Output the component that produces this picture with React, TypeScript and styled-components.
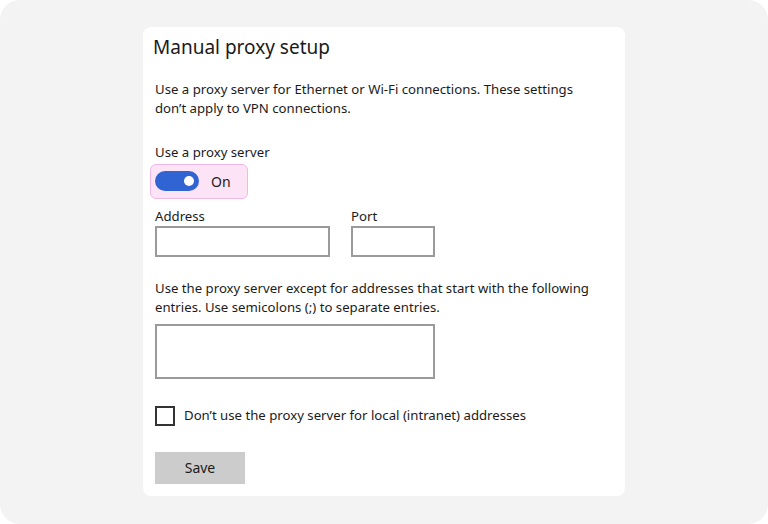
import styled, { createGlobalStyle } from "styled-components";

const GlobalStyle = createGlobalStyle`
  html, body {
    margin: 0;
    padding: 0;
    background: #ffffff;
  }
  body {
    font-family: "Noto Sans", "Open Sans", sans-serif;
    color: #1b1b1b;
  }
`;

const Backdrop = styled.div`
  width: 768px;
  height: 524px;
  box-sizing: border-box;
  background: #f3f3f3;
  border-radius: 20px;
  padding: 27px 0 0 143px;
`;

const Card = styled.section`
  width: 482px;
  height: 469px;
  box-sizing: border-box;
  background: #ffffff;
  border-radius: 8px;
  padding: 6px 12px 0 12px;
  display: flex;
  flex-direction: column;
  align-items: flex-start;
`;

const Title = styled.h1`
  margin: 0 0 0 -2px;
  font-size: 19px;
  font-weight: 400;
  line-height: 28px;
  color: #1a1a1a;
`;

interface TextProps {
  $gap: number;
}

const Text = styled.p<TextProps>`
  margin: ${(p: TextProps) => p.$gap}px 0 0 0;
  font-size: 13.2px;
  line-height: 19px;
  color: #1b1b1b;
`;

const SwitchBox = styled.div`
  margin: 1.5px 0 0 -5px;
  width: 98px;
  height: 35px;
  box-sizing: border-box;
  border: 1px solid #f1b8e6;
  border-radius: 6px;
  background: #fce3f6;
  display: flex;
  align-items: center;
  padding-left: 4px;
  gap: 12px;
`;

const Track = styled.span`
  position: relative;
  width: 44px;
  height: 20px;
  border-radius: 10px;
  background: #3064d3;
  flex-shrink: 0;
`;

const Knob = styled.span`
  position: absolute;
  right: 5px;
  top: 5px;
  width: 10px;
  height: 10px;
  border-radius: 50%;
  background: #ffffff;
`;

const SwitchLabel = styled.span`
  font-size: 14px;
  line-height: 19px;
`;

const FieldRow = styled.div`
  margin-top: 8.5px;
  display: flex;
  gap: 21px;
`;

const Field = styled.label`
  display: flex;
  flex-direction: column;
  font-size: 13.2px;
  line-height: 19px;
`;

interface InputProps {
  $w: number;
  $h: number;
}

const Input = styled.input<InputProps>`
  width: ${(p: InputProps) => p.$w}px;
  height: ${(p: InputProps) => p.$h}px;
  box-sizing: border-box;
  margin: 0;
  border: 2px solid #9a9a9a;
  border-radius: 0;
  background: #ffffff;
  padding: 0 6px;
  font: inherit;
  outline: none;
`;

const TextArea = styled.textarea`
  margin-top: 7px;
  width: 280px;
  height: 55px;
  box-sizing: border-box;
  border: 2px solid #9a9a9a;
  border-radius: 0;
  resize: none;
  outline: none;
  font: inherit;
`;

const CheckRow = styled.label`
  margin-top: 27px;
  display: flex;
  align-items: center;
  gap: 9px;
  font-size: 13.2px;
  line-height: 19px;
`;

const Box = styled.span`
  width: 20px;
  height: 20px;
  box-sizing: border-box;
  border: 2px solid #333333;
  background: #ffffff;
`;

const SaveButton = styled.button`
  margin-top: 26px;
  width: 90px;
  height: 32px;
  border: none;
  border-radius: 0;
  background: #cccccc;
  color: #1b1b1b;
  font-family: inherit;
  font-size: 14px;
`;

const App = () => {
  return (
    <>
      <GlobalStyle />
      <Backdrop>
        <Card>
          <Title>Manual proxy setup</Title>
          <Text $gap={19}>
            Use a proxy server for Ethernet or Wi-Fi connections. These settings
            <br />
            don’t apply to VPN connections.
          </Text>
          <Text $gap={25}>Use a proxy server</Text>
          <SwitchBox>
            <Track>
              <Knob />
            </Track>
            <SwitchLabel>On</SwitchLabel>
          </SwitchBox>
          <FieldRow>
            <Field>
              Address
              <Input $w={175} $h={31} />
            </Field>
            <Field>
              Port
              <Input $w={84} $h={31} />
            </Field>
          </FieldRow>
          <Text $gap={21.5}>
            Use the proxy server except for addresses that start with the following
            <br />
            entries. Use semicolons (;) to separate entries.
          </Text>
          <TextArea />
          <CheckRow>
            <Box />
            Don’t use the proxy server for local (intranet) addresses
          </CheckRow>
          <SaveButton>Save</SaveButton>
        </Card>
      </Backdrop>
    </>
  );
};

export default App;
